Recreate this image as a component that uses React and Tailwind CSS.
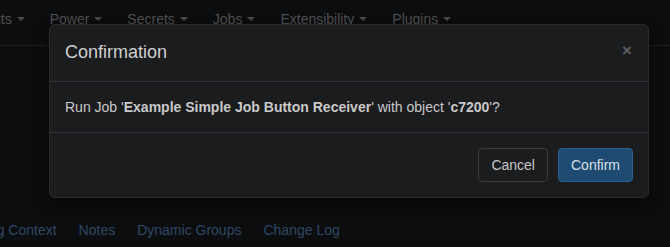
import React from 'react';

const navItems = ['Circuits', 'Power', 'Secrets', 'Jobs', 'Extensibility', 'Plugins'];
const tabs = ['Config Context', 'Notes', 'Dynamic Groups', 'Change Log'];

const Caret = () => (
  <span className="ml-[5px] inline-block h-0 w-0 border-x-[4px] border-t-[4px] border-x-transparent border-t-[#4a4b4d] align-middle" />
);

export default function App() {
  return (
    <div
      className="relative h-[247px] w-[670px] overflow-hidden bg-[#0c0d0e] text-[14px] leading-[20px]"
      style={{ fontFamily: '"Liberation Sans", Arial, sans-serif' }}
    >
      {/* navbar behind the backdrop */}
      <div className="h-[46px] border-b border-[#1d1e20] pt-[9px]">
        <div className="ml-[-35px] flex gap-[25px] whitespace-nowrap text-[#505153]">
          {navItems.map((n) => (
            <span key={n} className="flex items-center">
              {n}
              <Caret />
            </span>
          ))}
        </div>
      </div>

      {/* tabs behind the backdrop */}
      <div className="mt-[174px] ml-[-36px] flex gap-[22px] whitespace-nowrap text-[#2c4865]">
        {tabs.map((t) => (
          <span key={t}>{t}</span>
        ))}
      </div>

      {/* modal */}
      <div className="absolute left-[49px] top-[24px] w-[600px] rounded-[6px] border border-[#2a2b2d] bg-[#1b1c1e] text-[#c9c9c9] shadow-[0_5px_15px_rgba(0,0,0,0.5)]">
        <div className="flex items-start justify-between border-b border-[#333437] p-[15px]">
          <h4 className="text-[18px] leading-[25.7px] text-[#d0d0d0]">Confirmation</h4>
          <span className="mr-[1px] mt-[1px] text-[17px] font-bold leading-[20px] text-[#5f6063]">×</span>
        </div>
        <div className="p-[15px]">
          Run Job '<b>Example Simple Job Button Receiver</b>' with object '<b>c7200</b>'?
        </div>
        <div className="flex justify-end gap-[10px] border-t border-[#333437] p-[15px]">
          <button className="h-[34px] rounded-[4px] border border-[#3a3b3d] bg-[#1b1c1e] px-[12px] text-[#c9c9c9]">
            Cancel
          </button>
          <button className="h-[34px] rounded-[4px] border border-[#2b5f94] bg-[#1f4b73] px-[12px] text-[#d6e0ea]">
            Confirm
          </button>
        </div>
      </div>
    </div>
  );
}
